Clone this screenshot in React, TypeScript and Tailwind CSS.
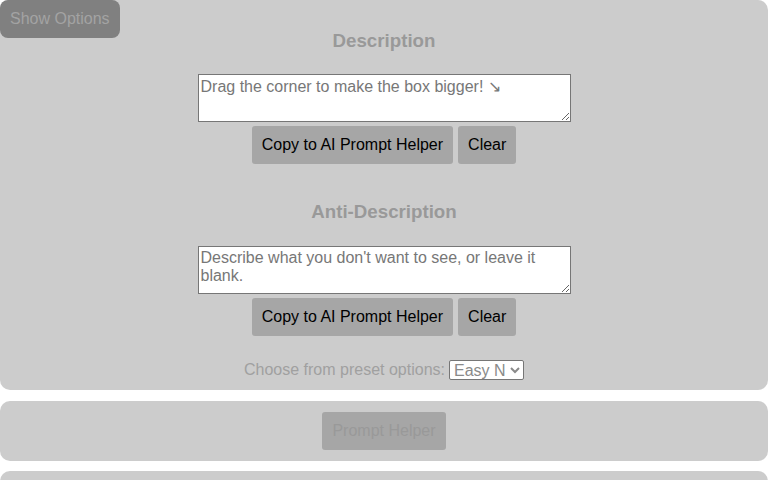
import { useState } from 'react';

function ActionRow() {
  return (
    <div className="flex justify-center gap-[5px] mt-[4px]">
      <button className="bg-[#a6a6a6] text-black px-[10px] py-[10px] leading-[18px] rounded-[3px]">Copy to AI Prompt Helper</button>
      <button className="bg-[#a6a6a6] text-black px-[10px] py-[10px] leading-[18px] rounded-[3px]">Clear</button>
    </div>
  );
}

export default function App() {
  const [desc, setDesc] = useState('');
  const [anti, setAnti] = useState('');

  return (
    <div className="relative min-h-[480px] bg-white text-[16px]" style={{ fontFamily: '"Liberation Sans", Arial, sans-serif' }}>
      <button className="absolute left-0 top-0 z-10 w-[120px] h-[38px] bg-[#808080] text-[#a3a3a3] px-[10px] leading-[18px] rounded-[8px] text-left">
        Show Options
      </button>

      <div className="bg-[#cccccc] rounded-[10px] flex flex-col items-center pt-[30px] pb-[8px]">
        <h3 className="text-[18.72px] leading-[22px] font-bold text-[#999999]">Description</h3>
        <textarea
          value={desc}
          onChange={e => setDesc(e.target.value)}
          placeholder="Drag the corner to make the box bigger! ↘"
          className="mt-[22px] w-[373px] h-[48px] bg-white border border-[#767676] px-[2px] pt-[3px] pb-0 leading-[18px] placeholder:text-[#777777]"
        />
        <ActionRow />

        <h3 className="mt-[37px] text-[18.72px] leading-[22px] font-bold text-[#999999]">Anti-Description</h3>
        <textarea
          value={anti}
          onChange={e => setAnti(e.target.value)}
          placeholder="Describe what you don't want to see, or leave it blank."
          className="mt-[23px] w-[373px] h-[48px] bg-white border border-[#767676] px-[2px] pt-[2px] pb-0 leading-[18px] placeholder:text-[#777777]"
        />
        <ActionRow />

        <div className="mt-[22px] flex items-center gap-[4px] text-[#a0a0a0]">
          <span>Choose from preset options:</span>
          <select className="w-[75px] h-[20px] bg-white border border-[#767676] text-[#8a8a8a] leading-[18px] rounded-[2px]">
            <option>Easy N</option>
            <option>Bad Hands</option>
          </select>
        </div>
      </div>

      <div className="mt-[11px] bg-[#cccccc] rounded-[10px] flex justify-center pt-[11px] pb-[11px]">
        <button className="bg-[#a6a6a6] text-[#999999] px-[10px] py-[10px] leading-[18px] rounded-[3px]">Prompt Helper</button>
      </div>

      <div className="mt-[10px] bg-[#cccccc] rounded-[10px] h-[60px]" />
    </div>
  );
}
